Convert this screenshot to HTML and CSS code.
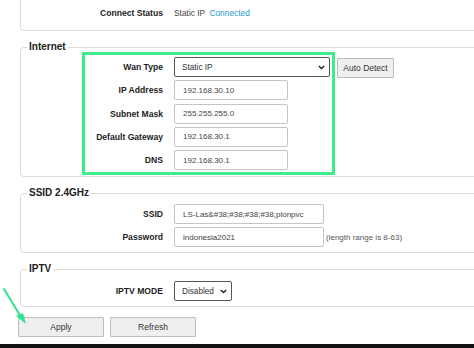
FILE: index.html
```html
<!DOCTYPE html>
<html lang="en">
<head>
  <meta charset="UTF-8" />
  <title>WAN Settings</title>
  <meta name="viewport" content="width=device-width, initial-scale=1" />
  <link rel="stylesheet" href="styles.css">
</head>
<body>
  <div class="page">

    <div class="status-box">
      <div class="rows">
        <span class="label">Connect Status</span>
        <span class="value">Static IP <span class="ok">Connected</span></span>
      </div>
    </div>

    <fieldset class="box box-internet">
      <legend>Internet</legend>
      <div class="rows">
        <span class="label">Wan Type</span>
        <div class="line">
          <div class="select wide">
            <span>Static IP</span>
            <svg width="7" height="5" viewBox="0 0 7 5"><path d="M0.8 0.9 L3.5 3.6 L6.2 0.9" fill="none" stroke="#222" stroke-width="1.4"/></svg>
          </div>
          <button class="btn small">Auto Detect</button>
        </div>

        <span class="label">IP Address</span>
        <input class="field" type="text" value="192.168.30.10" />

        <span class="label">Subnet Mask</span>
        <input class="field" type="text" value="255.255.255.0" />

        <span class="label">Default Gateway</span>
        <input class="field" type="text" value="192.168.30.1" />

        <span class="label">DNS</span>
        <input class="field" type="text" value="192.168.30.1" />
      </div>
    </fieldset>

    <fieldset class="box box-ssid">
      <legend>SSID 2.4GHz</legend>
      <div class="rows">
        <span class="label">SSID</span>
        <input class="field long" type="text" value="LS-Las&amp;#38;#38;#38;#38;plonpvc" />

        <span class="label">Password</span>
        <div class="line">
          <input class="field long" type="text" value="indonesia2021" />
          <span class="hint">(length range is 8-63)</span>
        </div>
      </div>
    </fieldset>

    <fieldset class="box box-iptv">
      <legend>IPTV</legend>
      <div class="rows">
        <span class="label">IPTV MODE</span>
        <div class="select short">
          <span>Disabled</span>
          <svg width="7" height="5" viewBox="0 0 7 5"><path d="M0.8 0.9 L3.5 3.6 L6.2 0.9" fill="none" stroke="#222" stroke-width="1.4"/></svg>
        </div>
      </div>
    </fieldset>

    <div class="actions">
      <button class="btn">Apply</button>
      <button class="btn">Refresh</button>
    </div>

    <div class="bottom-bar"></div>

    <!-- annotation marks drawn over the page -->
    <div class="highlight"></div>
    <svg class="arrow" width="34" height="44" viewBox="0 0 34 44">
      <line x1="4" y1="1" x2="21" y2="29" stroke="#2fe38b" stroke-width="2" stroke-linecap="round"/>
      <polygon points="26,36 16,28 23,25" fill="#2fe38b"/>
    </svg>
  </div>
</body>
</html>
```

FILE: styles.css
```css
html, body {
  margin: 0;
  overflow: hidden;
  background: #fff;
}
body {
  font-family: 'Liberation Sans', Arial, sans-serif;
  color: #222;
}
.page {
  position: relative;
  width: 520px;
  padding-left: 18px;
}
.status-box {
  margin-left: 2px;
  border: 1px solid #dcdcdc;
  border-top: none;
  border-radius: 0 0 4px 4px;
  padding: 3px 0 7px 0;
}
.box {
  margin: 10px 0 0 2px;
  padding: 5px 0 5px 0;
  border: 1px solid #dcdcdc;
  border-radius: 4px;
  min-width: 0;
}
.box-internet {
  padding-top: 4px;
  padding-bottom: 6px;
}
.box-iptv {
  padding-top: 6px;
}
legend {
  margin-left: 6px;
  padding: 0 2px;
  font-size: 10px;
  line-height: 12px;
  font-weight: 700;
  color: #222;
}
.rows {
  display: grid;
  grid-template-columns: 142px auto;
  column-gap: 11px;
  row-gap: 3.25px;
  align-items: center;
  justify-items: start;
}
.rows > * {
  height: 20px;
}
.label {
  justify-self: end;
  display: flex;
  align-items: center;
  font-size: 8.6px;
  font-weight: 700;
  color: #222;
}
.value {
  display: flex;
  align-items: center;
  gap: 2px;
  font-size: 8.4px;
  color: #444;
  white-space: pre;
}
.ok {
  color: #1f9ad6;
}
.line {
  display: flex;
  align-items: center;
}
.select {
  box-sizing: border-box;
  height: 20px;
  display: flex;
  align-items: center;
  justify-content: space-between;
  padding: 0 4px 0 7px;
  border: 1px solid #555;
  border-radius: 2px;
  background: #fff;
  font-size: 8.2px;
  color: #333;
}
.select.wide {
  width: 156px;
}
.select.short {
  width: 58px;
}
.field {
  box-sizing: border-box;
  width: 114px;
  height: 20px;
  margin: 0;
  padding: 0 8px;
  border: 1px solid #c4c4c4;
  border-radius: 2px;
  font-family: 'Liberation Sans', Arial, sans-serif;
  font-size: 8px;
  color: #444;
  background: #fff;
}
.field.long {
  width: 150px;
}
.hint {
  margin-left: 2px;
  font-size: 8px;
  color: #555;
}
.btn {
  box-sizing: border-box;
  width: 86px;
  height: 20px;
  margin: 0;
  padding: 0;
  border: 1px solid #bdbdbd;
  border-radius: 1px;
  background: #efefef;
  font-family: 'Liberation Sans', Arial, sans-serif;
  font-size: 8.5px;
  color: #333;
}
.btn.small {
  width: 57px;
  margin-left: 7px;
  margin-top: 2px;
}
.actions {
  display: flex;
  gap: 6px;
  margin-top: 10px;
}
.bottom-bar {
  margin: 7px 0 0 -18px;
  height: 10px;
  background: #111;
}
.highlight {
  position: absolute;
  left: 82px;
  top: 52px;
  width: 247px;
  height: 117px;
  border: 3px solid #3eec8c;
}
.arrow {
  position: absolute;
  left: 0;
  top: 288px;
}
```
